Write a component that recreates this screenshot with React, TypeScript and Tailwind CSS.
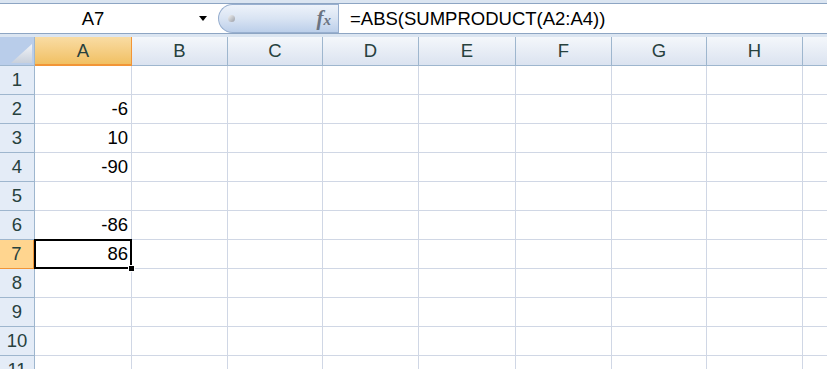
import React from 'react';

const cols = ['A', 'B', 'C', 'D', 'E', 'F', 'G', 'H', ''];
const rows = [1, 2, 3, 4, 5, 6, 7, 8, 9, 10, 11];
const values: Record<number, string> = { 2: '-6', 3: '10', 4: '-90', 6: '-86', 7: '86' };

const gridCols =
  'grid grid-cols-[35px_97px_96px_95px_96px_97px_96px_95px_96px_96px]';

const FormulaBar = () => {
  return (
    <div className="h-[37px] bg-[#dbe5f1] pt-[3px]">
      <div className="flex h-[31px] border-y border-[#8da5c3] bg-white">
        <div className="flex w-[218px] items-center">
          <div className="w-[186px] text-center text-[18.5px] text-black">A7</div>
          <div className="ml-[13px] h-0 w-0 border-x-[4px] border-t-[5px] border-x-transparent border-t-black" />
        </div>
        <div className="relative flex w-[120px] items-center rounded-l-[15px] border border-r-0 border-[#98afcf] bg-gradient-to-b from-[#eef3fa] via-[#d9e4f3] to-[#bccfea]">
          <div className="ml-[9px] h-[7px] w-[7px] rounded-full bg-gradient-to-br from-[#f4f4f4] to-[#9a9ea6]" />
          <div className="ml-auto mr-[7px] flex items-baseline font-['Liberation_Serif',serif] font-bold italic text-[#6b7482]">
            <span className="text-[21px] leading-none">f</span>
            <span className="text-[15px] leading-none">x</span>
          </div>
        </div>
        <div className="flex flex-1 items-center border-l border-[#98afcf] pl-[11px] text-[18.5px] text-black">
          =ABS(SUMPRODUCT(A2:A4))
        </div>
      </div>
    </div>
  );
};

const Corner = () => (
  <div className="relative h-[29px] border-b border-r border-[#9eb6ce] bg-[#b9cdea]">
    <svg className="absolute left-[11px] top-[7px]" width="21" height="19" viewBox="0 0 21 19">
      <defs>
        <linearGradient id="tri" x1="0" y1="0" x2="0" y2="1">
          <stop offset="0" stopColor="#f2f4f8" />
          <stop offset="1" stopColor="#c8d0dc" />
        </linearGradient>
      </defs>
      <polygon points="21,0 21,19 0,19" fill="url(#tri)" />
    </svg>
  </div>
);

export default function App() {
  return (
    <div className="h-[369px] w-[827px] overflow-hidden bg-white font-['Liberation_Sans',Arial,sans-serif]">
      <FormulaBar />
      <div className={gridCols}>
        <Corner />
        {cols.map((c, i) =>
          i === 0 ? (
            <div
              key={i}
              className="flex h-[29px] items-center justify-center border-b-2 border-r border-[#f29536] bg-gradient-to-b from-[#f9dca3] to-[#f1c062] text-[18.5px] text-[#27413e]"
            >
              {c}
            </div>
          ) : (
            <div
              key={i}
              className="flex h-[29px] items-center justify-center border-b border-r border-[#9eb6ce] bg-gradient-to-b from-[#f4f7fb] to-[#dbe3f0] text-[18.5px] text-[#27413e]"
            >
              {c}
            </div>
          )
        )}
        {rows.map((r) => (
          <React.Fragment key={r}>
            <div
              className={
                r === 7
                  ? 'flex h-[29px] items-center justify-center border-b border-r-2 border-[#f29536] bg-[#ffd58f] text-[18.5px] text-[#27413e]'
                  : 'flex h-[29px] items-center justify-center border-b border-r border-[#9eb6ce] bg-[#e4ecf7] text-[18.5px] text-[#27413e]'
              }
            >
              {r}
            </div>
            {cols.map((_, i) => (
              <div
                key={i}
                className="relative flex h-[29px] items-center justify-end border-b border-r border-[#d0d7e5] pr-[3px] text-[18.5px] text-black"
              >
                {i === 0 && values[r]}
                {i === 0 && r === 7 && (
                  <>
                    <div className="pointer-events-none absolute -left-[1px] -top-[1px] h-[30px] w-[98px] border-2 border-black" />
                    <div className="absolute -bottom-[4px] -right-[4px] z-10 h-[7px] w-[7px] border border-white bg-black" />
                  </>
                )}
              </div>
            ))}
          </React.Fragment>
        ))}
      </div>
    </div>
  );
}
